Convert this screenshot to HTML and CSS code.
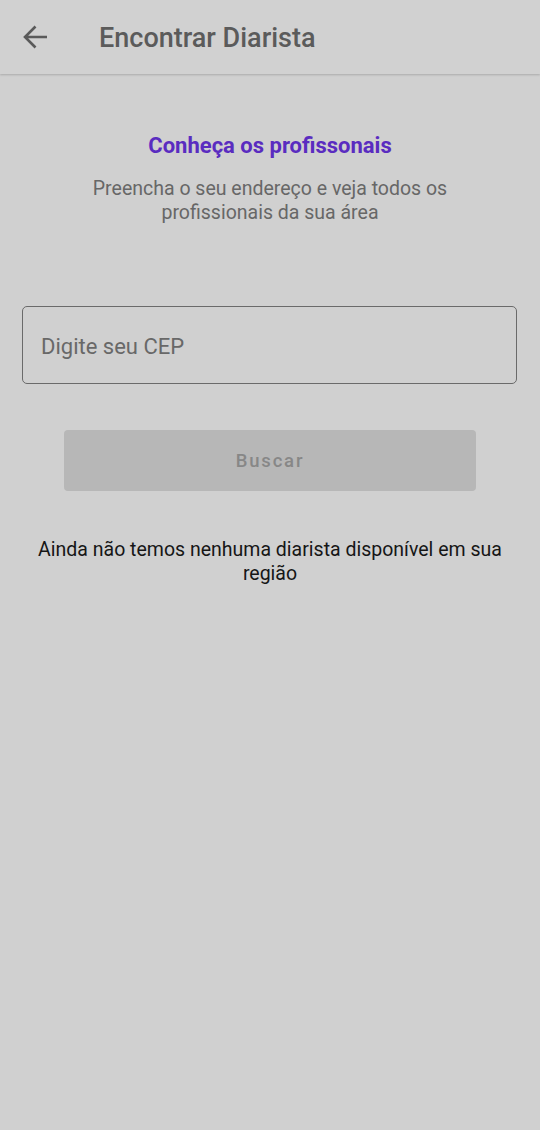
FILE: index.html
```html
<!DOCTYPE html>
<html lang="pt">
<head>
<meta charset="utf-8">
<link rel="stylesheet" href="styles.css">
</head>
<body>
<header class="appbar">
  <button class="back" aria-label="Voltar">
    <svg width="26" height="26" viewBox="0 0 26 26"><path d="M25 13H3.5M13.5 2.5L3 13l10.5 10.5" fill="none" stroke="#5a5a5a" stroke-width="2.6" stroke-linejoin="miter"/></svg>
  </button>
  <h1 class="title">Encontrar Diarista</h1>
</header>
<main class="content">
  <h2 class="heading">Conheça os profissonais</h2>
  <p class="sub">Preencha o seu endereço e veja todos os<br>profissionais da sua área</p>
  <div class="field"><span class="placeholder">Digite seu CEP</span></div>
  <div class="btnwrap"><button class="buscar">Buscar</button></div>
  <p class="empty">Ainda não temos nenhuma diarista disponível em sua<br>região</p>
</main>
</body>
</html>
```
FILE: styles.css
```css
html, body { margin: 0; padding: 0; }
body {
  background: #d0d0d0;
  font-family: Roboto, "Noto Sans", sans-serif;
  width: 540px;
  height: 1130px;
  overflow: hidden;
}
.appbar {
  height: 74px;
  display: flex;
  align-items: center;
  background: #d1d1d1;
  box-shadow: 0 1px 2px rgba(0,0,0,0.18);
  position: relative;
}
.back {
  background: none;
  border: 0;
  padding: 0;
  margin-left: 22px;
  width: 26px;
  height: 26px;
  display: flex;
  align-items: center;
  justify-content: center;
}
.back svg { width: 26px; height: 26px; }
.title {
  margin: 2px 0 0 51px;
  font-size: 27px;
  font-weight: 500;
  color: #5b5b5b;
  line-height: 32px;
}
.content { display: flex; flex-direction: column; align-items: center; }
.heading {
  margin: 58px 0 0;
  font-size: 22px;
  font-weight: 700;
  color: #5a2cc0;
  line-height: 28px;
}
.sub {
  margin: 17px 0 0;
  font-size: 19.5px;
  line-height: 24px;
  color: #676767;
  text-align: center;
}
.field {
  margin-top: 81px;
  width: 493px;
  height: 76px;
  border: 1px solid #6a6a6a;
  border-radius: 5px;
  display: flex;
  align-items: center;
  align-self: flex-start;
  margin-left: 22px;
}
.placeholder {
  margin-left: 18px;
  margin-top: 3px;
  font-size: 22px;
  color: #686868;
}
.btnwrap { margin-top: 46px; }
.buscar {
  width: 412px;
  height: 61px;
  border: 0;
  border-radius: 4px;
  background: #b7b7b7;
  color: #878787;
  font-family: Roboto, sans-serif;
  font-size: 18.5px;
  font-weight: 500;
  letter-spacing: 1.8px;
  padding: 0;
}
.empty {
  margin: 47px 0 0;
  font-size: 19.5px;
  line-height: 24px;
  color: #161616;
  text-align: center;
}
```
